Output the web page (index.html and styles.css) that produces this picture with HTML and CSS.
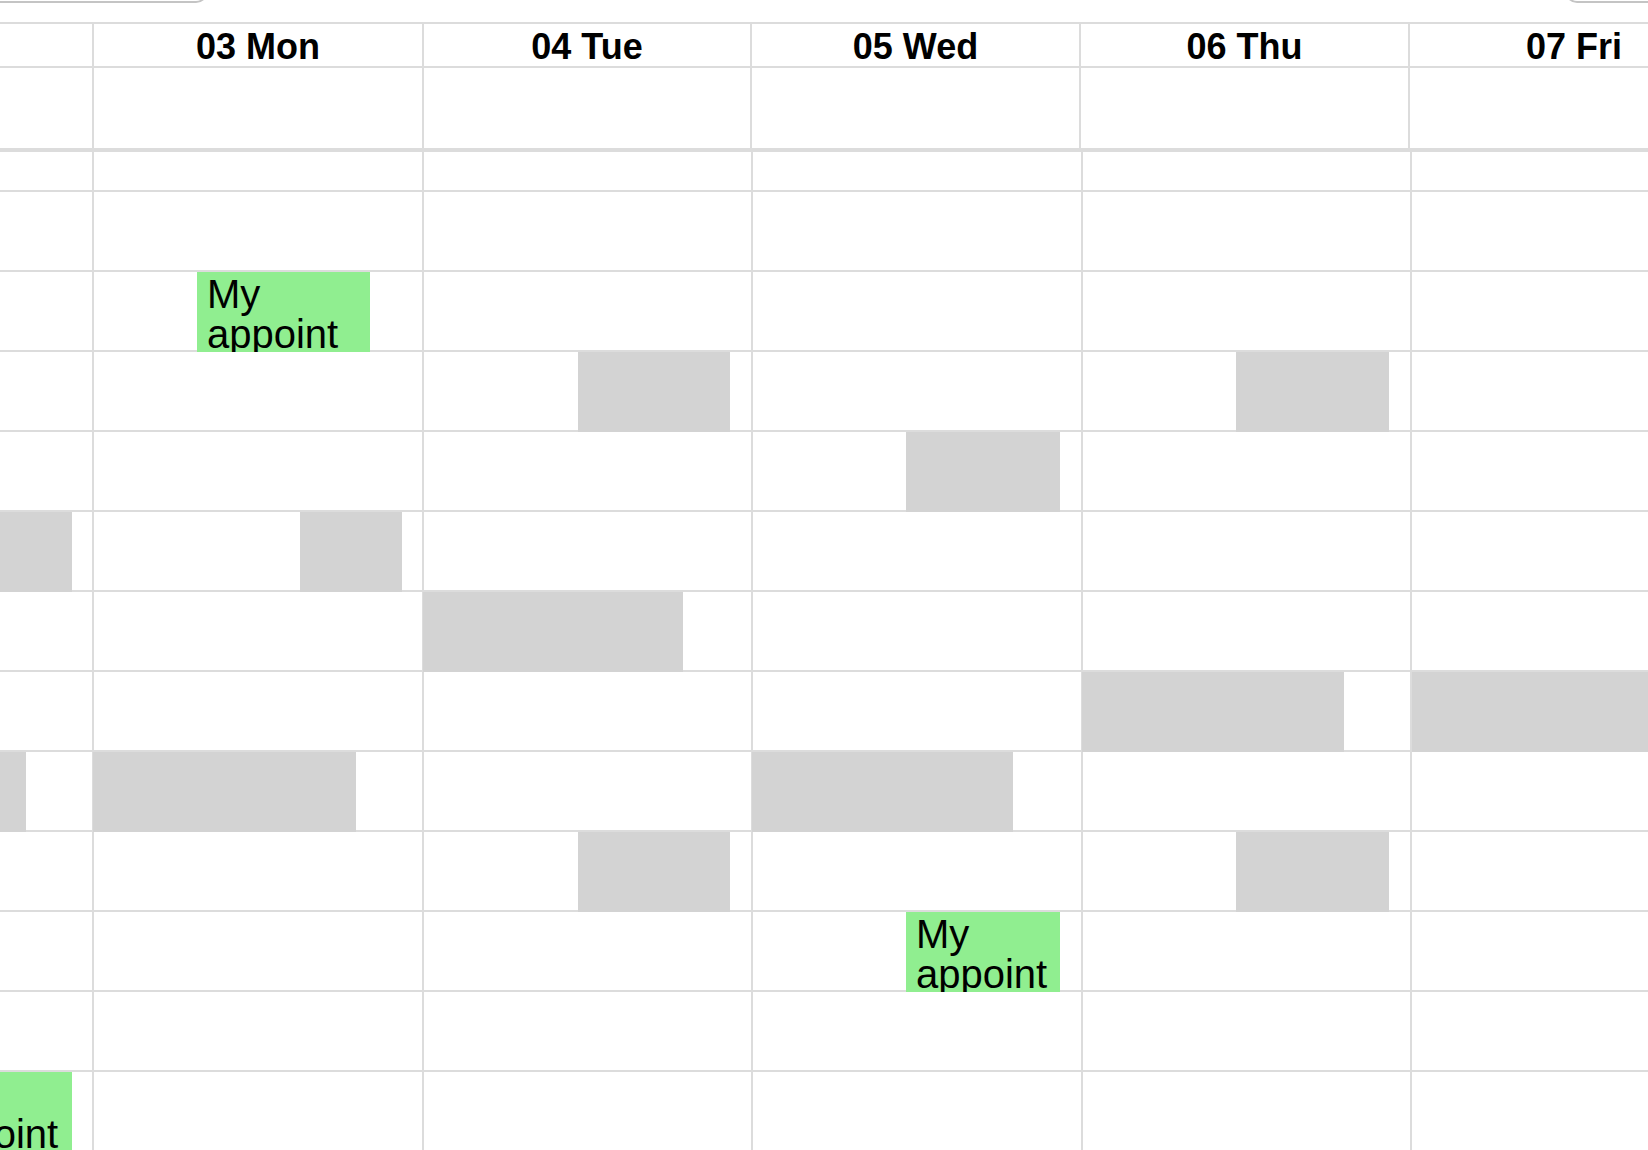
FILE: index.html
```html
<!DOCTYPE html>
<html lang="en">
<head>
<meta charset="utf-8">
<title>Week schedule</title>
<link rel="stylesheet" href="styles.css">
</head>
<body>
<div class="toolbar">
  <div class="tb-btn tb-left"></div>
  <div class="tb-btn tb-right"></div>
</div>
<div class="viewport">
  <div class="cal">
    <div class="head-row">
      <div class="head-cell"></div>
      <div class="head-cell">03 Mon</div>
      <div class="head-cell">04 Tue</div>
      <div class="head-cell">05 Wed</div>
      <div class="head-cell">06 Thu</div>
      <div class="head-cell">07 Fri</div>
      <div class="head-cell"></div>
    </div>
    <div class="allday-row">
      <div class="allday-cell"></div>
      <div class="allday-cell"></div>
      <div class="allday-cell"></div>
      <div class="allday-cell"></div>
      <div class="allday-cell"></div>
      <div class="allday-cell"></div>
      <div class="allday-cell"></div>
    </div>
    <div class="body-row">
      <!-- Sun (scrolled partly out of view) -->
      <div class="day-col">
        <div class="slot slot-first"></div>
        <div class="slot"></div><div class="slot"></div><div class="slot"></div><div class="slot"></div>
        <div class="slot"></div><div class="slot"></div><div class="slot"></div><div class="slot"></div>
        <div class="slot"></div><div class="slot"></div><div class="slot"></div><div class="slot"></div>
        <div class="slot"></div>
        <div class="event busy" style="top:360px;left:153px;width:155px"></div>
        <div class="event busy" style="top:600px;left:-1px;width:263px"></div>
        <div class="event mine" style="top:920px;left:153px;width:155px">My appointment</div>
      </div>
      <!-- Mon -->
      <div class="day-col">
        <div class="slot slot-first"></div>
        <div class="slot"></div><div class="slot"></div><div class="slot"></div><div class="slot"></div>
        <div class="slot"></div><div class="slot"></div><div class="slot"></div><div class="slot"></div>
        <div class="slot"></div><div class="slot"></div><div class="slot"></div><div class="slot"></div>
        <div class="slot"></div>
        <div class="event mine" style="top:120px;left:103px;width:173px">My appointment</div>
        <div class="event busy" style="top:360px;left:206px;width:102px"></div>
        <div class="event busy" style="top:600px;left:-1px;width:263px"></div>
      </div>
      <!-- Tue -->
      <div class="day-col">
        <div class="slot slot-first"></div>
        <div class="slot"></div><div class="slot"></div><div class="slot"></div><div class="slot"></div>
        <div class="slot"></div><div class="slot"></div><div class="slot"></div><div class="slot"></div>
        <div class="slot"></div><div class="slot"></div><div class="slot"></div><div class="slot"></div>
        <div class="slot"></div>
        <div class="event busy" style="top:200px;left:154px;width:152px"></div>
        <div class="event busy" style="top:440px;left:-1px;width:260px"></div>
        <div class="event busy" style="top:680px;left:154px;width:152px"></div>
      </div>
      <!-- Wed -->
      <div class="day-col">
        <div class="slot slot-first"></div>
        <div class="slot"></div><div class="slot"></div><div class="slot"></div><div class="slot"></div>
        <div class="slot"></div><div class="slot"></div><div class="slot"></div><div class="slot"></div>
        <div class="slot"></div><div class="slot"></div><div class="slot"></div><div class="slot"></div>
        <div class="slot"></div>
        <div class="event busy" style="top:280px;left:153px;width:154px"></div>
        <div class="event busy" style="top:600px;left:-1px;width:261px"></div>
        <div class="event mine" style="top:760px;left:153px;width:154px">My appointment</div>
      </div>
      <!-- Thu -->
      <div class="day-col">
        <div class="slot slot-first"></div>
        <div class="slot"></div><div class="slot"></div><div class="slot"></div><div class="slot"></div>
        <div class="slot"></div><div class="slot"></div><div class="slot"></div><div class="slot"></div>
        <div class="slot"></div><div class="slot"></div><div class="slot"></div><div class="slot"></div>
        <div class="slot"></div>
        <div class="event busy" style="top:200px;left:153px;width:153px"></div>
        <div class="event busy" style="top:520px;left:-1px;width:262px"></div>
        <div class="event busy" style="top:680px;left:153px;width:153px"></div>
      </div>
      <!-- Fri -->
      <div class="day-col">
        <div class="slot slot-first"></div>
        <div class="slot"></div><div class="slot"></div><div class="slot"></div><div class="slot"></div>
        <div class="slot"></div><div class="slot"></div><div class="slot"></div><div class="slot"></div>
        <div class="slot"></div><div class="slot"></div><div class="slot"></div><div class="slot"></div>
        <div class="slot"></div>
        <div class="event busy" style="top:520px;left:0px;width:262px"></div>
      </div>
      <!-- Sat -->
      <div class="day-col">
        <div class="slot slot-first"></div>
        <div class="slot"></div><div class="slot"></div><div class="slot"></div><div class="slot"></div>
        <div class="slot"></div><div class="slot"></div><div class="slot"></div><div class="slot"></div>
        <div class="slot"></div><div class="slot"></div><div class="slot"></div><div class="slot"></div>
        <div class="slot"></div>
      </div>
    </div>
  </div>
</div>
</body>
</html>
```
FILE: styles.css
```css
html, body {
  margin: 0;
  padding: 0;
  background: #ffffff;
  overflow: hidden;
  width: 1648px;
  height: 1150px;
}

body {
  font-family: "Liberation Sans", Arial, Helvetica, sans-serif;
  color: #000;
}

.toolbar {
  height: 22px;
  display: flex;
  justify-content: space-between;
  align-items: flex-start;
  overflow: hidden;
}

.tb-btn {
  box-sizing: border-box;
  height: 32px;
  margin-top: -29px;
  border: 2px solid #c4c4c4;
}

.tb-left {
  width: 208px;
  border-left: 0;
  border-radius: 0 12px 12px 0;
}

.tb-right {
  width: 83px;
  border-right: 0;
  border-radius: 12px 0 0 12px;
}

.viewport {
  overflow: hidden;
  width: 1648px;
  height: 1128px;
}

.cal {
  width: 2300px;
  margin-left: -236px;
}

.head-row,
.allday-row {
  display: grid;
  grid-template-columns: 330px 330px 328px 329px 329px 330px 330px;
}

.head-row {
  border-top: 2px solid #dcdcdc;
  border-bottom: 2px solid #dcdcdc;
}

.head-cell {
  box-sizing: border-box;
  height: 42px;
  padding-top: 2px;
  line-height: 42px;
  border-right: 2px solid #dcdcdc;
  text-align: center;
  font-weight: bold;
  font-size: 36px;
  white-space: nowrap;
  overflow: visible;
}

.allday-row {
  border-bottom: 4px solid #dcdcdc;
}

.allday-cell {
  box-sizing: border-box;
  height: 80px;
  border-right: 2px solid #dcdcdc;
}

.body-row {
  display: grid;
  grid-template-columns: 330px 330px 329px 330px 329px 330px 330px;
}

.day-col {
  position: relative;
  box-sizing: border-box;
  border-right: 2px solid #dcdcdc;
  display: flex;
  flex-direction: column;
}

.slot {
  flex: 0 0 auto;
  height: 78px;
  border-bottom: 2px solid #dcdcdc;
}

.slot-first {
  height: 38px;
}

.event {
  position: absolute;
  box-sizing: border-box;
  height: 80px;
  overflow: hidden;
}

.busy {
  background: #d3d3d3;
}

.mine {
  background: #90ee90;
  padding: 2px 10px 0 10px;
  font-size: 40px;
  line-height: 40px;
  overflow-wrap: anywhere;
}
```
